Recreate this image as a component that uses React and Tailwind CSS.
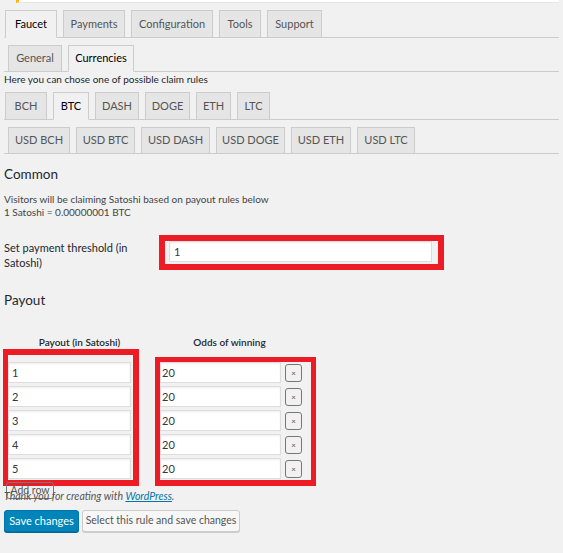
import React from "react";
import clsx from "clsx";

const mainTabs = [
    { label: "Faucet", w: "w-[52px]" },
    { label: "Payments", w: "w-[62px]" },
    { label: "Configuration", w: "w-[82px]" },
    { label: "Tools", w: "w-[42px]" },
    { label: "Support", w: "w-[55px]" },
];

const subTabs = [
    { label: "General", w: "w-[54px]" },
    { label: "Currencies", w: "w-[66px]" },
];

const coinTabs = [
    { label: "BCH", w: "w-[42px]" },
    { label: "BTC", w: "w-[36px]" },
    { label: "DASH", w: "w-[44px]" },
    { label: "DOGE", w: "w-[45px]" },
    { label: "ETH", w: "w-[35px]" },
    { label: "LTC", w: "w-[33px]" },
];

const usdTabs = [
    { label: "USD BCH", w: "w-[62px]" },
    { label: "USD BTC", w: "w-[59px]" },
    { label: "USD DASH", w: "w-[69px]" },
    { label: "USD DOGE", w: "w-[69px]" },
    { label: "USD ETH", w: "w-[60px]" },
    { label: "USD LTC", w: "w-[58px]" },
];

const rules = [
    { payout: "1", odds: "20" },
    { payout: "2", odds: "20" },
    { payout: "3", odds: "20" },
    { payout: "4", odds: "20" },
    { payout: "5", odds: "20" },
];

// Riga di tab in stile WordPress (nav-tab)
function TabRow({ tabs, active, height, className }) {
    return (
        <div className={clsx("flex gap-[6px] border-b border-[#ccc]", className)}>
            {tabs.map((t) => (
                <span
                    key={t.label}
                    className={clsx(
                        "-mb-px flex items-center justify-center border border-[#ccc] text-[11px] whitespace-nowrap",
                        height,
                        t.w,
                        t.label === active
                            ? "border-b-[#f1f1f1] bg-[#f1f1f1] text-[#000]"
                            : "bg-[#e5e5e5] text-[#555]"
                    )}
                >
                    {t.label}
                </span>
            ))}
        </div>
    );
}

const inputClass =
    "block h-[21px] border border-[#ddd] bg-white text-[11px] text-[#32373c] shadow-[inset_0_1px_2px_rgba(0,0,0,0.07)] outline-none";

export default function App() {
    return (
        <div className="min-h-screen bg-[#f1f1f1] px-[4px] font-['Lato',sans-serif] text-[#23282d]">
            {/* Avviso in alto */}
            <div className="ml-[12px] h-[3px] border-b border-l-[3px] border-b-[#e5e5e5] border-l-[#ffb900] bg-white" />

            <TabRow tabs={mainTabs} active="Faucet" height="h-[28px]" className="mt-[7px] pl-[1px]" />
            <TabRow tabs={subTabs} active="Currencies" height="h-[27px]" className="mt-[7px] pl-[4px]" />

            <p className="mt-[1px] text-[10px] leading-[13px]">Here you can chose one of possible claim rules</p>

            <TabRow tabs={coinTabs} active="BTC" height="h-[28px]" className="mt-[6px] gap-[5px] pl-[1px]" />
            <TabRow tabs={usdTabs} active="" height="h-[27px]" className="mt-[7px] gap-[5px] pl-[4px]" />

            {/* Sezione comune */}
            <h2 className="mt-[11px] text-[13.5px] leading-[18px]">Common</h2>
            <p className="mt-[10px] text-[10px] leading-[13px] text-[#444]">
                Visitors will be claiming Satoshi based on payout rules below
                <br />
                1 Satoshi = 0.00000001 BTC
            </p>

            <div className="mt-[16px] flex items-start">
                <label className="mt-[5px] w-[155px] pr-[20px] text-[11px] leading-[15px]">
                    Set payment threshold (in Satoshi)
                </label>
                <div className="border-[6px] border-[#ed1c24] pb-[2px] pl-[4px] pr-[6px]">
                    <input className={clsx(inputClass, "w-[263px] pl-[4px]")} defaultValue="1" />
                </div>
            </div>

            <h2 className="mt-[21px] text-[13.5px] leading-[18px]">Payout</h2>

            {/* Tabella delle regole */}
            <div className="mt-[27px] flex text-[10px] font-semibold leading-[13px]">
                <div className="w-[151px] text-center">Payout (in Satoshi)</div>
                <div className="w-[149px] text-center">Odds of winning</div>
            </div>

            <div className="flex items-end gap-[16px]">
                <div className="-ml-px flex flex-col gap-[3px] border-[6px] border-l-[5px] border-[#ed1c24] pb-[1px] pr-[2px] pt-[7px]">
                    {rules.map((r, i) => (
                        <input key={i} className={clsx(inputClass, "w-[123px] pl-[3px]")} defaultValue={r.payout} />
                    ))}
                </div>
                <div className="flex flex-col gap-[3px] border-[5px] border-b-[6px] border-[#ed1c24] pb-[1px] pr-[9px]">
                    {rules.map((r, i) => (
                        <div key={i} className="flex items-center gap-[4px]">
                            <input className={clsx(inputClass, "w-[121px] pl-[1px]")} defaultValue={r.odds} />
                            <button className="flex h-[18px] w-[17px] items-center justify-center rounded-[3px] border border-[#777] bg-[#f1f1f1] text-[8px] leading-none text-[#555]">
                                ×
                            </button>
                        </div>
                    ))}
                </div>
            </div>

            <button className="relative z-10 -mt-[4px] ml-[2px] block h-[17px] w-[48px] rounded-[3px] border border-[#777] text-[10.5px] leading-[15px] text-[#555]">
                Add row
            </button>

            <p className="relative z-20 -mt-[9px] text-[10.5px] italic leading-[13px] text-[#555]">
                Thank you for creating with{" "}
                <a href="#" className="text-[#0073aa] underline">
                    WordPress
                </a>
                .
            </p>

            <div className="mt-[7px] flex gap-[3px]">
                <button className="h-[22px] w-[75px] whitespace-nowrap rounded-[3px] border border-[#0073aa] bg-[#0085ba] text-[11px] text-white shadow-[0_1px_0_#006799]">
                    Save changes
                </button>
                <button className="h-[22px] w-[158px] whitespace-nowrap rounded-[3px] border border-[#ccc] bg-[#f7f7f7] text-[10.5px] text-[#555] shadow-[0_1px_0_#ccc]">
                    Select this rule and save changes
                </button>
            </div>
        </div>
    );
}
